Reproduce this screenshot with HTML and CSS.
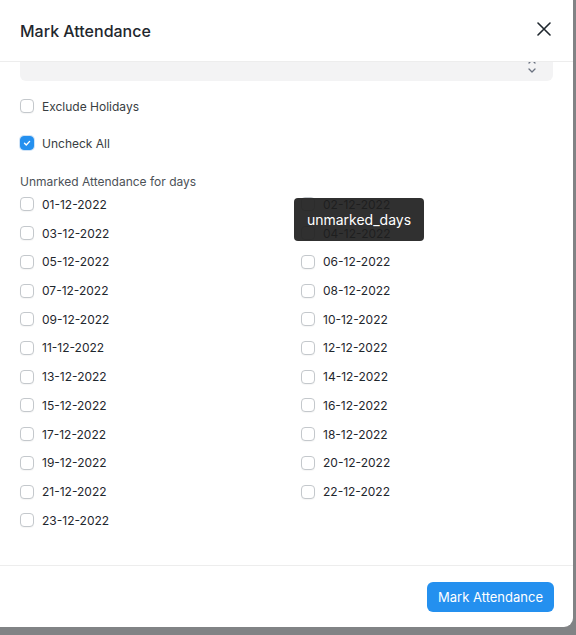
FILE: index.html
```html
<!DOCTYPE html>
<html>
<head>
<meta charset="utf-8">
<link rel="stylesheet" href="styles.css">
</head>
<body>
<div class="modal">
  <div class="modal-header">
    <h4 class="title">Mark Attendance</h4>
    <button class="close" aria-label="Close">
      <svg width="14" height="14" viewBox="0 0 14 14"><path d="M1 1L13 13M13 1L1 13" stroke="#1f272e" stroke-width="1.6" stroke-linecap="round"/></svg>
    </button>
  </div>
  <div class="modal-body">
    <div class="scroll">
      <div class="select">
        <svg class="select-icon" width="10" height="18" viewBox="0 0 10 18"><path d="M2 6L5 3L8 6M2 12L5 15L8 12" fill="none" stroke="#6b7280" stroke-width="1.3" stroke-linecap="round" stroke-linejoin="round"/></svg>
      </div>
      <label class="check first"><span class="box"></span><span>Exclude Holidays</span></label>
      <label class="check second"><span class="box checked"><svg width="10" height="10" viewBox="0 0 10 10"><path d="M2.5 5.2L4.3 7L7.6 3.4" fill="none" stroke="#fff" stroke-width="1.4" stroke-linecap="round" stroke-linejoin="round"/></svg></span><span>Uncheck All</span></label>
      <div class="section-label">Unmarked Attendance for days</div>
      <div class="days">
        <label class="check"><span class="box"></span><span>01-12-2022</span></label>
        <label class="check"><span class="box"></span><span>02-12-2022</span></label>
        <label class="check"><span class="box"></span><span>03-12-2022</span></label>
        <label class="check"><span class="box"></span><span>04-12-2022</span></label>
        <label class="check"><span class="box"></span><span>05-12-2022</span></label>
        <label class="check"><span class="box"></span><span>06-12-2022</span></label>
        <label class="check"><span class="box"></span><span>07-12-2022</span></label>
        <label class="check"><span class="box"></span><span>08-12-2022</span></label>
        <label class="check"><span class="box"></span><span>09-12-2022</span></label>
        <label class="check"><span class="box"></span><span>10-12-2022</span></label>
        <label class="check"><span class="box"></span><span>11-12-2022</span></label>
        <label class="check"><span class="box"></span><span>12-12-2022</span></label>
        <label class="check"><span class="box"></span><span>13-12-2022</span></label>
        <label class="check"><span class="box"></span><span>14-12-2022</span></label>
        <label class="check"><span class="box"></span><span>15-12-2022</span></label>
        <label class="check"><span class="box"></span><span>16-12-2022</span></label>
        <label class="check"><span class="box"></span><span>17-12-2022</span></label>
        <label class="check"><span class="box"></span><span>18-12-2022</span></label>
        <label class="check"><span class="box"></span><span>19-12-2022</span></label>
        <label class="check"><span class="box"></span><span>20-12-2022</span></label>
        <label class="check"><span class="box"></span><span>21-12-2022</span></label>
        <label class="check"><span class="box"></span><span>22-12-2022</span></label>
        <label class="check"><span class="box"></span><span>23-12-2022</span></label>
        <div class="tooltip">unmarked_days</div>
      </div>
    </div>
  </div>
  <div class="modal-footer">
    <button class="btn-primary">Mark Attendance</button>
  </div>
</div>
</body>
</html>
```
FILE: styles.css
```css
* { box-sizing: border-box; }
html, body { margin: 0; padding: 0; }
body {
  width: 576px;
  height: 635px;
  background: #818385;
  font-family: Inter, "Noto Sans", sans-serif;
  color: #1f272e;
  overflow: hidden;
}
.modal {
  width: 573px;
  height: 627px;
  background: #fff;
  border-radius: 0 0 9px 0;
  display: flex;
  flex-direction: column;
}
.modal-header {
  height: 62px;
  flex: none;
  display: flex;
  align-items: center;
  justify-content: space-between;
  padding: 0 20px;
  border-bottom: 1px solid #ededed;
}
.title {
  margin: 0;
  font-size: 16px;
  font-weight: 500;
  color: #1f272e;
}
.close {
  border: 0;
  background: none;
  padding: 0;
  width: 14px;
  height: 14px;
  margin-right: 2px;
  margin-top: -4px;
  display: flex;
}
.modal-body {
  flex: 1;
  overflow: hidden;
  padding: 0 20px;
}
.scroll {
  margin-top: -9px;
}
.select {
  height: 28px;
  background: #f3f3f4;
  border-radius: 6px;
  position: relative;
}
.select-icon {
  position: absolute;
  right: 16px;
  top: 4px;
}
.check {
  display: flex;
  align-items: center;
  gap: 8px;
  font-size: 12px;
  color: #383d42;
  height: 14px;
}
.check.first { margin-top: 18px; }
.check.second { margin-top: 23px; }
.box {
  width: 14px;
  height: 14px;
  border: 1px solid #c4c8cc;
  border-radius: 4px;
  background: #fff;
  flex: none;
  display: flex;
  align-items: center;
  justify-content: center;
  box-shadow: 0 1px 1px rgba(0,0,0,0.04);
}
.box.checked {
  background: #2490ef;
  border-color: #2490ef;
  box-shadow: 0 0 0 1px #cfe3f7;
}
.section-label {
  margin-top: 24px;
  font-size: 12px;
  color: #4c5157;
  line-height: 16px;
}
.days {
  position: relative;
  display: grid;
  grid-template-columns: 281px 1fr;
  grid-auto-rows: 28.73px;
  margin-top: 0;
}
.days .check {
  height: 28.73px;
  color: #1f272e;
}
.tooltip {
  position: absolute;
  left: 274px;
  top: 8px;
  width: 130px;
  height: 43px;
  background: rgba(30, 30, 30, 0.92);
  color: #fff;
  border-radius: 4px;
  font-size: 14px;
  display: flex;
  align-items: center;
  justify-content: center;
}
.modal-footer {
  height: 62px;
  flex: none;
  border-top: 1px solid #ededed;
  display: flex;
  align-items: center;
  justify-content: flex-end;
  padding: 0 19px;
}
.btn-primary {
  border: 0;
  background: #2490ef;
  color: #fff;
  font-family: Inter, "Noto Sans", sans-serif;
  font-size: 13px;
  height: 30px;
  padding: 0 11px;
  border-radius: 6px;
}
```
